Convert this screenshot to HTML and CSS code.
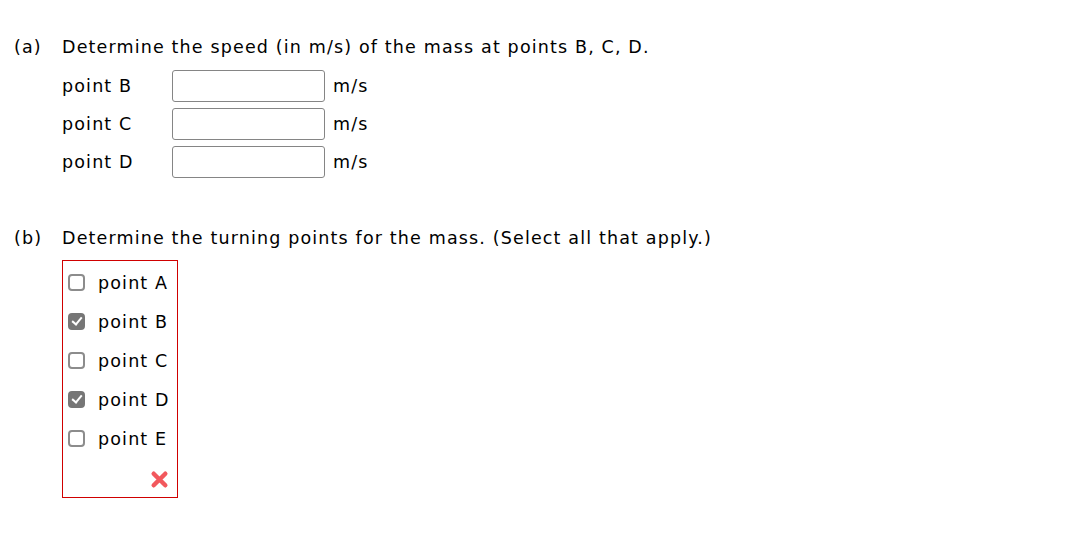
FILE: index.html
```html
<!DOCTYPE html>
<html lang="en">
<head>
    <meta charset="UTF-8">
    <title>Question</title>
    <link rel="stylesheet" href="styles.css">
</head>
<body>

    <div class="part part-a">
        <div class="part-head">
            <span class="part-label">(a)</span>
            <span>Determine the speed (in m/s) of the mass at points B, C, D.</span>
        </div>
        <div class="answers">
            <div class="answer-row">
                <span class="answer-name">point B</span>
                <input type="text" class="answer-box">
                <span class="unit">m/s</span>
            </div>
            <div class="answer-row">
                <span class="answer-name">point C</span>
                <input type="text" class="answer-box">
                <span class="unit">m/s</span>
            </div>
            <div class="answer-row">
                <span class="answer-name">point D</span>
                <input type="text" class="answer-box">
                <span class="unit">m/s</span>
            </div>
        </div>
    </div>

    <div class="part part-b">
        <div class="part-head">
            <span class="part-label">(b)</span>
            <span>Determine the turning points for the mass. (Select all that apply.)</span>
        </div>
        <div class="choices wrong">
            <label class="choice"><input type="checkbox" class="check" disabled> point A</label>
            <label class="choice"><input type="checkbox" class="check" checked disabled> point B</label>
            <label class="choice"><input type="checkbox" class="check" disabled> point C</label>
            <label class="choice"><input type="checkbox" class="check" checked disabled> point D</label>
            <label class="choice"><input type="checkbox" class="check" disabled> point E</label>
            <div class="mark">
                <svg width="19" height="19" viewBox="0 0 18 18">
                    <path d="M3.5 3.5 L14.5 14.5 M14.5 3.5 L3.5 14.5" stroke="#f2585d" stroke-width="4.2" stroke-linecap="round"/>
                </svg>
            </div>
        </div>
    </div>

</body>
</html>
```

FILE: styles.css
```css
body {
    margin: 0;
    padding: 36px 0 0 14px;
    font-family: "DejaVu Sans", Verdana, sans-serif;
    font-size: 17.5px;
    letter-spacing: 1.15px;
    color: #000;
    background: #fff;
}
.part-head {
    display: flex;
    line-height: 22px;
}
.part-label {
    width: 48px;
}
.answers {
    margin: 9px 0 0 48px;
}
.answer-row {
    display: flex;
    align-items: center;
    height: 38px;
}
.answer-name {
    width: 110px;
}
.answer-box {
    width: 153px;
    height: 32px;
    box-sizing: border-box;
    border: 1px solid #858585;
    border-radius: 3px;
    margin: 0;
}
.unit {
    margin-left: 8px;
}
.part-b {
    margin-top: 46px;
}
.choices {
    width: 109px;
    margin: 11px 0 0 48px;
    border: 1px solid #d00000;
    padding: 2px 0 5px 5px;
}
.choice {
    display: flex;
    align-items: center;
    height: 39px;
}
.check {
    appearance: none;
    width: 17px;
    height: 17px;
    margin: 0 13px 0 0;
    border: 2px solid #8c8c8c;
    border-radius: 4px;
    background: #fff;
    position: relative;
}
.check:checked {
    background: #767676;
    border-color: #767676;
}
.check:checked::after {
    content: "";
    position: absolute;
    left: 3.5px;
    top: -0.5px;
    width: 4px;
    height: 8px;
    border: solid #fff;
    border-width: 0 2.5px 2.5px 0;
    transform: rotate(40deg);
}
.mark {
    display: flex;
    justify-content: flex-end;
    padding: 12px 8px 0 0;
    height: 22px;
}
```
